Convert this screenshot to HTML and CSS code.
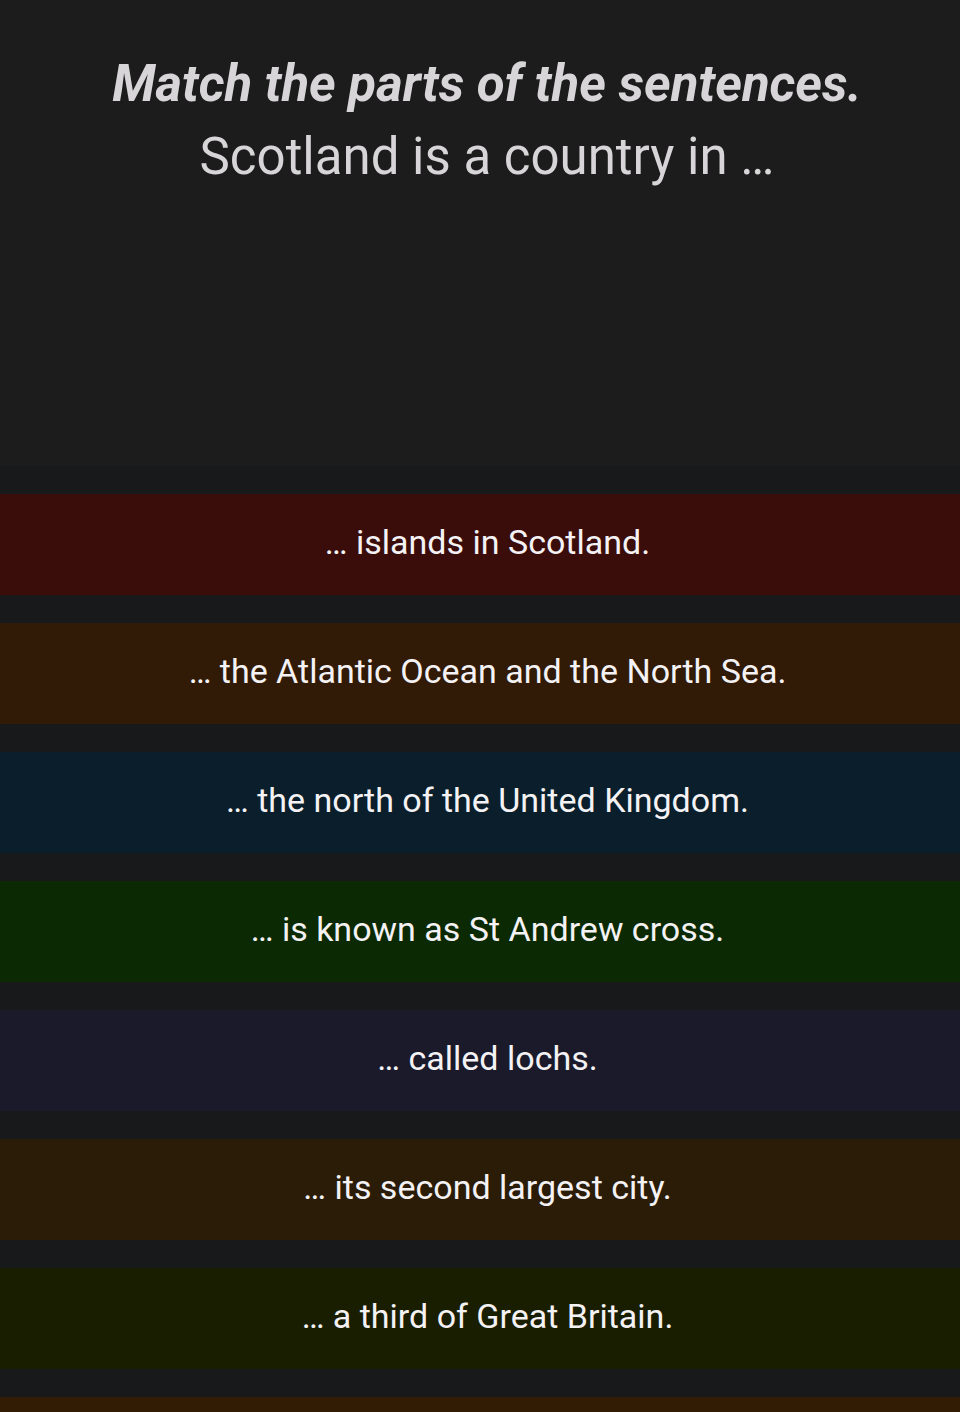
FILE: index.html
```html
<!DOCTYPE html>
<html lang="en">
<head>
  <meta charset="UTF-8" />
  <meta name="viewport" content="width=device-width, initial-scale=1.0" />
  <title>Match the parts</title>
  <link rel="stylesheet" href="styles.css">
</head>
<body>
  <div class="question">
    <h1>Match the parts of the sentences.</h1>
    <p class="prompt">Scotland is a country in …</p>
  </div>

  <ul class="answers">
    <li class="answer red">… islands in Scotland.</li>
    <li class="answer orange">… the Atlantic Ocean and the North Sea.</li>
    <li class="answer blue">… the north of the United Kingdom.</li>
    <li class="answer green">… is known as St Andrew cross.</li>
    <li class="answer indigo">… called lochs.</li>
    <li class="answer amber">… its second largest city.</li>
    <li class="answer olive">… a third of Great Britain.</li>
    <li class="answer rust">… on the Firth of Forth.</li>
  </ul>
</body>
</html>
```

FILE: styles.css
```css
html, body {
  margin: 0;
  padding: 0;
  background-color: #18191a;
  font-family: Roboto, 'Liberation Sans', Arial, sans-serif;
  overflow: hidden;
}
.question {
  height: 466px;
  background-color: #1b1c1b;
  text-align: center;
  padding: 51px 0 0 14px;
  box-sizing: border-box;
  color: #d8d5d8;
}
.question h1 {
  margin: 0;
  font-size: 51px;
  font-weight: bold;
  font-style: italic;
  line-height: 66px;
}
.question .prompt {
  margin: 8px 0 0 0;
  font-size: 51px;
  line-height: 64px;
}
.answers {
  list-style: none;
  margin: 0;
  padding: 28px 0 0 0;
}
.answer {
  box-sizing: border-box;
  height: 101px;
  margin-bottom: 28px;
  padding: 0 0 5px 15px;
  display: flex;
  align-items: center;
  justify-content: center;
  color: #f4f2f4;
  font-size: 34px;
}
.red { background-color: #3a0c0a; }
.orange { background-color: #311a06; }
.blue { background-color: #0a1f2b; }
.green { background-color: #0b2902; }
.indigo { background-color: #1a1a2b; }
.amber { background-color: #2a1c06; }
.olive { background-color: #1a1e01; }
.rust { background-color: #331c04; }
```
